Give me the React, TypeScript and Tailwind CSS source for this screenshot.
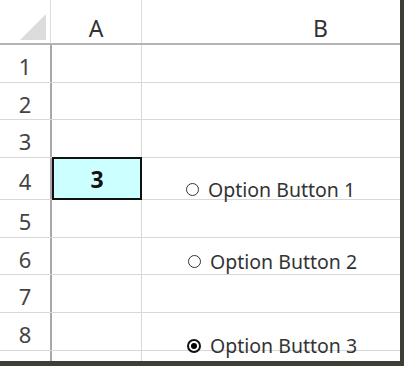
import React from 'react';

const rowHeights = [38, 37, 38, 42, 38, 37, 38, 38];

const Radio = ({ checked }: { checked?: boolean }) => (
  <span
    className={
      'flex items-center justify-center rounded-full bg-white ' +
      (checked ? 'h-[14px] w-[14px] border-2 border-[#111]' : 'h-[13px] w-[13px] border border-[#333]')
    }
  >
    {checked && <span className="h-[6px] w-[6px] rounded-full bg-black" />}
  </span>
);

const Option = ({ label, checked, className }: { label: string; checked?: boolean; className: string }) => (
  <div className={'absolute flex items-center ' + className}>
    <Radio checked={checked} />
    <span className="ml-[9px] text-[19.5px] leading-none text-[#333]">{label}</span>
  </div>
);

export default function App() {
  return (
    <div
      className="relative h-[366px] w-[404px] overflow-hidden border-b-[5px] border-r-4 border-b-[#3f3e35] border-r-[#3f3e35] bg-white text-[#444]"
      style={{ fontFamily: '"Noto Sans", "Open Sans", sans-serif' }}
    >
      {/* column headers */}
      <div className="flex h-[45px] border-b-2 border-[#b4b4b4]">
        <div className="relative w-[51px] border-r border-[#dcdcdc]">
          <svg className="absolute left-0 top-0" width="50" height="43">
            <polygon points="20,40 46,40 46,14" fill="#dcdcdc" />
          </svg>
        </div>
        <div className="flex w-[91px] items-center justify-center border-r border-[#dcdcdc] pt-[14px] text-[23px] text-[#333]">
          A
        </div>
        <div className="flex flex-1 items-center pl-[171px] pt-[14px] text-[23px] text-[#333]">B</div>
      </div>

      {/* rows */}
      {rowHeights.map((h, i) => (
        <div key={i} className="flex border-b border-[#d8d8d8]" style={{ height: h }}>
          <div className="flex w-[52px] items-center justify-center border-r-2 border-[#a8a8a8] pt-[6px] text-[22px]">
            {i + 1}
          </div>
          {i === 3 ? (
            <div className="-mt-px -mb-px flex w-[90px] items-center justify-center border-2 border-[#111] bg-[#ccffff] pt-[2px] text-[23px] font-bold text-[#111]">
              3
            </div>
          ) : (
            <div className="w-[90px] border-r border-[#d8d8d8]" />
          )}
          <div className="flex-1" />
        </div>
      ))}
      <div className="flex h-full">
        <div className="w-[52px] border-r-2 border-[#a8a8a8]" />
        <div className="w-[90px] border-r border-[#d8d8d8]" />
      </div>

      <Option label="Option Button 1" className="left-[186px] top-[180px]" />
      <Option label="Option Button 2" className="left-[188px] top-[252px]" />
      <Option label="Option Button 3" checked className="left-[187px] top-[336px]" />
    </div>
  );
}
